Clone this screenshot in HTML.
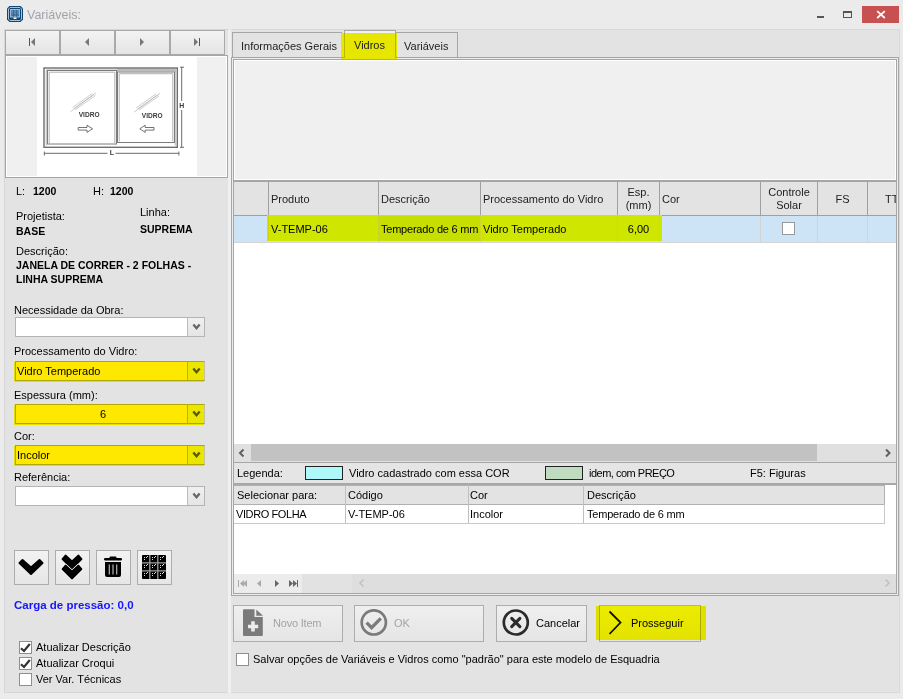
<!DOCTYPE html>
<html><head><meta charset="utf-8">
<style>
*{box-sizing:border-box;margin:0;padding:0}
html,body{width:903px;height:699px;overflow:hidden;background:#ebebeb;font-family:"Liberation Sans",sans-serif;font-size:11px;color:#000;position:relative}
.a{position:absolute}
.t{position:absolute;white-space:nowrap;line-height:13px}
.b{font-weight:bold;font-size:10.5px}
.nb{position:absolute;top:30px;height:25px;border:1px solid #a9a9a9;background:linear-gradient(#f3f3f3,#e4e4e4)}
.combo{position:absolute;left:15px;width:190px;height:20px;border:1px solid #b4b4b4;background:#fff}
.combo .dd{position:absolute;right:0;top:0;width:17px;height:18px;border-left:1px solid #bdbdbd;background:linear-gradient(#f0f0f0,#e5e5e5)}
.combo.y{background:#ffe800;border-color:#b0a800;border-right-color:#c4c4a0;box-shadow:-1px 1px 0 #e8e000}
.combo.y .dd{background:#ebe600;border-left-color:#b8b400}
.chev{position:absolute;left:4px;top:5px}
.cb{position:absolute;width:13px;height:13px;border:1px solid #8f8f8f;background:#fff}
.ib{position:absolute;top:550px;width:35px;height:35px;border:1px solid #adadad;background:linear-gradient(#f2f2f2,#e6e6e6)}
.btn{position:absolute;top:605px;height:37px;border:1px solid #adadad;background:linear-gradient(#efefef,#e5e5e5)}
.hc{position:absolute;top:0;height:33px;border-right:1px solid #a0a0a0}
</style></head><body>
<!-- title bar -->
<svg class="a" style="left:7px;top:6px" width="16" height="16"><path d="M2.5 0H13.5L16 2.5V13.5L13.5 16H2.5L0 13.5V2.5Z" fill="#0e4676"/><path d="M3 1.5H13L14.5 3V13L13 14.5H3L1.5 13V3Z" fill="none" stroke="#a9c1d8" stroke-width="1"/><rect x="3.5" y="3.5" width="9" height="7.5" fill="#5a86ac" stroke="#a3bad0" stroke-width="1"/><path d="M6.5 4V11M9.5 4V11M4 9H12" stroke="#2c5c88" stroke-width="0.7"/><rect x="6.5" y="11.5" width="3" height="1.5" fill="#fff"/></svg>
<div class="t" style="left:27px;top:9px;font-size:12.5px;color:#a0a4aa">Variáveis:</div>
<div class="a" style="left:817px;top:16px;width:7px;height:2px;background:#555"></div>
<div class="a" style="left:843px;top:11px;width:9px;height:7px;border:1px solid #555;border-top-width:2px"></div>
<div class="a" style="left:862px;top:6px;width:37px;height:17px;background:#c75050"></div>
<svg class="a" style="left:876px;top:10px" width="10" height="9"><path d="M1.2 1.2L8.8 8M8.8 1.2L1.2 8" stroke="#fff" stroke-width="1.8"/></svg>

<!-- LEFT PANEL -->
<div class="a" style="left:4px;top:29px;width:225px;height:664px;background:#e3e3e3;border:1px solid #d6d6d6"></div>
<div class="nb" style="left:5px;width:55px"></div>
<div class="nb" style="left:60px;width:55px"></div>
<div class="nb" style="left:115px;width:55px"></div>
<div class="nb" style="left:170px;width:55px"></div>
<svg class="a" style="left:27px;top:37px" width="10" height="10"><rect x="2" y="1" width="1" height="8" fill="#555"/><path d="M8 1L4 5L8 9Z" fill="#777"/></svg>
<svg class="a" style="left:82px;top:37px" width="10" height="10"><path d="M7 1L3 5L7 9Z" fill="#777"/></svg>
<svg class="a" style="left:137px;top:37px" width="10" height="10"><path d="M3 1L7 5L3 9Z" fill="#777"/></svg>
<svg class="a" style="left:192px;top:37px" width="10" height="10"><path d="M2 1L6 5L2 9Z" fill="#777"/><rect x="7" y="1" width="1" height="8" fill="#555"/></svg>

<!-- image box -->
<div class="a" style="left:5px;top:55px;width:223px;height:123px;border:1px solid #a6a6a6;background:#f0f0f0;box-shadow:inset 0 0 0 1px #fff"></div>
<div class="a" style="left:37px;top:57px;width:160px;height:119px;background:#fff"></div>
<svg class="a" style="left:37px;top:57px" width="160" height="119">
 <g fill="none">
  <rect x="80" y="11.5" width="59" height="3" fill="#c4c4c4"/>
  
  <rect x="7" y="11" width="133.3" height="79.3" stroke="#6e6e6e" stroke-width="1.4"/>
  <path d="M9.2 88.6V13H138.2V88.6" stroke="#b4b4b4"/>
  <rect x="10.5" y="13.5" width="69" height="73.5" stroke="#7c7c7c"/>
  <path d="M12.2 86V15.2H77.8V86" stroke="#b0b0b0"/>
  <rect x="80.5" y="15" width="57" height="70.5" stroke="#7c7c7c"/>
  <path d="M82.2 84.5V16.7H135.8V84.5" stroke="#b0b0b0"/>
  <path d="M144.7 10V44M144.7 53V90.5M143 10.2H147M143 90.3H147" stroke="#6a6a6a"/>
  <path d="M7.3 94.5V98.5M141.9 94.5V98.5M7.3 96.3H70.5M78.5 96.3H141.9" stroke="#6a6a6a"/>
 </g>
 <g stroke="#9a9a9a" stroke-width="0.5">
  <path d="M33.4 54.8L59.1 35.7M35.5 50.6L55.5 36.4M37 51.6L57 37.4M38.5 52.6L58.5 38.4"/>
  <path d="M97 55.2L123 36.3M99.1 51L119.1 36.8M100.6 52L120.6 37.8M102.1 53L122.1 38.8"/>
 </g>
 <text x="41.7" y="59.8" font-size="7.2" font-weight="bold" textLength="20.8" lengthAdjust="spacingAndGlyphs" font-family="Liberation Sans" fill="#3a3a3a">VIDRO</text>
 <text x="104.8" y="60.6" font-size="7.2" font-weight="bold" textLength="20.8" lengthAdjust="spacingAndGlyphs" font-family="Liberation Sans" fill="#3a3a3a">VIDRO</text>
 <text x="142.2" y="50.8" font-size="7" font-weight="bold" textLength="5" lengthAdjust="spacingAndGlyphs" font-family="Liberation Sans" fill="#3a3a3a">H</text>
 <text x="72.8" y="98.2" font-size="7" font-weight="bold" font-family="Liberation Sans" fill="#3a3a3a">L</text>
 <path d="M41.2 70.5H50V68.2L55.5 71.8L50 75.4V73.1H41.2Z" fill="#fff" stroke="#505050" stroke-width="0.8"/>
 <path d="M117 70.5H108.2V68.2L102.8 71.8L108.2 75.4V73.1H117Z" fill="#fff" stroke="#505050" stroke-width="0.8"/>
</svg>

<!-- labels -->
<div class="t" style="left:16px;top:185px">L:</div>
<div class="t b" style="left:33px;top:185px">1200</div>
<div class="t" style="left:93px;top:185px">H:</div>
<div class="t b" style="left:110px;top:185px">1200</div>
<div class="t" style="left:16px;top:210px">Projetista:</div>
<div class="t b" style="left:16px;top:225px">BASE</div>
<div class="t" style="left:140px;top:206px">Linha:</div>
<div class="t b" style="left:140px;top:223px">SUPREMA</div>
<div class="t" style="left:16px;top:245px">Descrição:</div>
<div class="t b" style="left:16px;top:259px">JANELA DE CORRER - 2 FOLHAS -</div>
<div class="t b" style="left:16px;top:273px">LINHA SUPREMA</div>

<div class="t" style="left:14px;top:304px">Necessidade da Obra:</div>
<div class="combo" style="top:317px"><div class="dd"><svg class="chev" width="9" height="8"><path d="M1.4 1.5L4.5 5.2L7.6 1.5" fill="none" stroke="#666" stroke-width="2.3"/></svg></div></div>
<div class="t" style="left:14px;top:345px">Processamento do Vidro:</div>
<div class="combo y" style="top:361px"><div class="t" style="left:1px;top:3px">Vidro Temperado</div><div class="dd"><svg class="chev" width="9" height="8"><path d="M1.3 1.5L4.5 5.2L7.7 1.5" fill="none" stroke="#5a5a00" stroke-width="2.4"/></svg></div></div>
<div class="t" style="left:14px;top:389px">Espessura (mm):</div>
<div class="combo y" style="top:404px"><div class="t" style="left:84px;top:3px">6</div><div class="dd"><svg class="chev" width="9" height="8"><path d="M1.3 1.5L4.5 5.2L7.7 1.5" fill="none" stroke="#5a5a00" stroke-width="2.4"/></svg></div></div>
<div class="t" style="left:14px;top:430px">Cor:</div>
<div class="combo y" style="top:445px"><div class="t" style="left:1px;top:3px">Incolor</div><div class="dd"><svg class="chev" width="9" height="8"><path d="M1.3 1.5L4.5 5.2L7.7 1.5" fill="none" stroke="#5a5a00" stroke-width="2.4"/></svg></div></div>
<div class="t" style="left:14px;top:471px">Referência:</div>
<div class="combo" style="top:486px"><div class="dd"><svg class="chev" width="9" height="8"><path d="M1.4 1.5L4.5 5.2L7.6 1.5" fill="none" stroke="#666" stroke-width="2.3"/></svg></div></div>

<div class="ib" style="left:14px"><svg class="a" style="left:3px;top:7px" width="28" height="20"><path d="M1.5 5L4.5 2L13 9.5L21.5 2L24.5 5L13 16Z" fill="#000" stroke="#000" stroke-width="2" stroke-linejoin="round"/></svg></div>
<div class="ib" style="left:55px"><svg class="a" style="left:5px;top:3px" width="24" height="28"><path d="M1.5 5L4.5 1.5L11 7.5L17.5 1.5L20.5 5L11 14.5Z" fill="#000" stroke="#000" stroke-width="1.8" stroke-linejoin="round"/><path d="M1.5 15L4.5 11.5L11 17.5L17.5 11.5L20.5 15L11 24.5Z" fill="#000" stroke="#fff" stroke-width="3.2" stroke-linejoin="round"/><path d="M1.5 15L4.5 11.5L11 17.5L17.5 11.5L20.5 15L11 24.5Z" fill="#000" stroke="#000" stroke-width="1.8" stroke-linejoin="round"/></svg></div>
<div class="ib" style="left:96px"><svg class="a" style="left:6px;top:5px" width="20" height="22"><rect x="1" y="2" width="18" height="2.5" rx="1.2" fill="#000"/><rect x="6.5" y="0.5" width="7" height="2.5" rx="1" fill="#000"/><path d="M2 6H18V19Q18 21 16 21H4Q2 21 2 19Z" fill="#000"/><path d="M6.3 8.5V18.5M10 8.5V18.5M13.7 8.5V18.5" stroke="#b4b4b4" stroke-width="1.2"/></svg></div>
<div class="ib" style="left:137px"><svg class="a" style="left:4px;top:4px" width="26" height="26"><rect x="0" y="0" width="24" height="24" rx="1" fill="#000"/><path d="M7.8 0V24M15.8 0V24M0 7.8H24M0 15.8H24" stroke="#a0a0a0" stroke-width="1.3"/><g fill="#ddd"><rect x="2" y="2" width="1" height="1"/><rect x="4" y="2" width="1" height="1"/><rect x="2" y="4" width="1" height="1"/><rect x="5" y="1" width="1" height="1"/><rect x="2" y="10" width="1" height="1"/><rect x="4" y="10" width="1" height="1"/><rect x="2" y="12" width="1" height="1"/><rect x="5" y="9" width="1" height="1"/><rect x="2" y="18" width="1" height="1"/><rect x="4" y="18" width="1" height="1"/><rect x="2" y="20" width="1" height="1"/><rect x="5" y="17" width="1" height="1"/><rect x="10" y="2" width="1" height="1"/><rect x="12" y="2" width="1" height="1"/><rect x="10" y="4" width="1" height="1"/><rect x="13" y="1" width="1" height="1"/><rect x="10" y="10" width="1" height="1"/><rect x="12" y="10" width="1" height="1"/><rect x="10" y="12" width="1" height="1"/><rect x="13" y="9" width="1" height="1"/><rect x="10" y="18" width="1" height="1"/><rect x="12" y="18" width="1" height="1"/><rect x="10" y="20" width="1" height="1"/><rect x="13" y="17" width="1" height="1"/><rect x="18" y="2" width="1" height="1"/><rect x="20" y="2" width="1" height="1"/><rect x="18" y="4" width="1" height="1"/><rect x="21" y="1" width="1" height="1"/><rect x="18" y="10" width="1" height="1"/><rect x="20" y="10" width="1" height="1"/><rect x="18" y="12" width="1" height="1"/><rect x="21" y="9" width="1" height="1"/><rect x="18" y="18" width="1" height="1"/><rect x="20" y="18" width="1" height="1"/><rect x="18" y="20" width="1" height="1"/><rect x="21" y="17" width="1" height="1"/></g></svg></div>

<div class="t b" style="left:14px;top:599px;color:#1515ff;font-size:11.5px">Carga de pressão: 0,0</div>

<div class="cb" style="left:19px;top:641px"><svg class="a" style="left:0;top:0" width="11" height="11"><path d="M1 6.2L4 9L9.8 2" fill="none" stroke="#333" stroke-width="2.2"/></svg></div>
<div class="t" style="left:36px;top:641px">Atualizar Descrição</div>
<div class="cb" style="left:19px;top:657px"><svg class="a" style="left:0;top:0" width="11" height="11"><path d="M1 6.2L4 9L9.8 2" fill="none" stroke="#333" stroke-width="2.2"/></svg></div>
<div class="t" style="left:36px;top:657px">Atualizar Croqui</div>
<div class="cb" style="left:19px;top:673px"></div>
<div class="t" style="left:36px;top:673px">Ver Var. Técnicas</div>

<!-- splitter -->
<div class="a" style="left:228px;top:30px;width:3px;height:663px;background:#f0f0f0"></div>

<!-- RIGHT PANEL -->
<div class="a" style="left:231px;top:29px;width:669px;height:664px;background:#e3e3e3;border:1px solid #d8d8d8;border-left-color:#e3e3e3"></div>



<!-- tabs -->
<div class="a" style="left:232px;top:32px;width:110px;height:26px;border:1px solid #a6a6a6;border-bottom:none;background:#e3e3e3"></div>
<div class="t" style="left:241px;top:40px;color:#222">Informações Gerais</div>
<div class="a" style="left:395px;top:32px;width:63px;height:26px;border:1px solid #a6a6a6;border-bottom:none;border-left:none;background:#e3e3e3"></div>
<div class="t" style="left:404px;top:40px;color:#222">Variáveis</div>
<!-- tab sheet -->
<div class="a" style="left:231px;top:57px;width:668px;height:539px;border:1px solid #a6a6a6;background:#ececec"></div>
<div class="a" style="left:344px;top:30px;width:52px;height:29px;border:1px solid #a6a6a6;border-bottom:none;background:#f0f0f0"></div>
<div class="a" style="left:341px;top:33px;width:56px;height:26px;background:#e6e600"></div>
<div class="a" style="left:344px;top:33px;width:1px;height:25px;background:#b8b800"></div>
<div class="a" style="left:395px;top:33px;width:1px;height:25px;background:#b8b800"></div><div class="a" style="left:341px;top:57px;width:4px;height:1px;background:#b8b800"></div><div class="a" style="left:395px;top:57px;width:2px;height:1px;background:#b8b800"></div>
<div class="t" style="left:354px;top:39px;color:#222">Vidros</div>
<!-- inner sunken area -->
<div class="a" style="left:233px;top:59px;width:664px;height:535px;border:1px solid #a6a6a6;background:#fff"></div>
<div class="a" style="left:234px;top:60px;width:662px;height:120px;border:1px solid #fff;border-left-color:#fff;background:#f0f0f0"></div>
<div class="a" style="left:234px;top:180px;width:662px;height:2px;background:#a6a6a6"></div>
<!-- main grid -->
<div class="a" style="left:234px;top:182px;width:662px;height:262px;background:#fff;overflow:hidden">
 <div class="a" style="left:0;top:0;width:662px;height:34px;background:#e3e3e3;border-bottom:1px solid #a0a0a0"></div>
 <div class="a" style="left:0;top:34px;width:662px;height:27px;background:#cde4f7;border-bottom:1px solid #d4d4d4"></div>
 <div class="a" style="left:33px;top:33px;width:395px;height:26px;background:#cee600"></div>
 <div class="a" style="left:144px;top:34px;width:102px;height:25px;background:#c6de00"></div>
 <div class="a" style="left:34px;top:0;width:1px;height:33px;background:#a0a0a0"></div><div class="a" style="left:34px;top:34px;width:1px;height:25px;background:#e0b000;opacity:.35"></div>
 <div class="a" style="left:144px;top:0;width:1px;height:33px;background:#a0a0a0"></div>
 <div class="a" style="left:246px;top:0;width:1px;height:33px;background:#a0a0a0"></div>
 <div class="a" style="left:383px;top:0;width:1px;height:33px;background:#a0a0a0"></div>
 <div class="a" style="left:425px;top:0;width:1px;height:33px;background:#a0a0a0"></div>
 <div class="a" style="left:526px;top:0;width:1px;height:33px;background:#a0a0a0"></div>
 <div class="a" style="left:583px;top:0;width:1px;height:33px;background:#a0a0a0"></div>
 <div class="a" style="left:633px;top:0;width:1px;height:33px;background:#a0a0a0"></div>
 <div class="a" style="left:144px;top:34px;width:1px;height:26px;background:#d8c060;opacity:.45"></div>
 <div class="a" style="left:246px;top:34px;width:1px;height:26px;background:#d8c060;opacity:.45"></div>
 <div class="a" style="left:383px;top:34px;width:1px;height:26px;background:#d8c060;opacity:.45"></div>
 <div class="a" style="left:425px;top:34px;width:1px;height:26px;background:#d8c060;opacity:.45"></div>
 <div class="a" style="left:526px;top:34px;width:1px;height:26px;background:#d4d4d4;opacity:1"></div>
 <div class="a" style="left:583px;top:34px;width:1px;height:26px;background:#d4d4d4;opacity:1"></div>
 <div class="a" style="left:633px;top:34px;width:1px;height:26px;background:#d4d4d4;opacity:1"></div>
 <div class="t" style="left:37px;top:11px;color:#222">Produto</div>
 <div class="t" style="left:147px;top:11px;color:#222">Descrição</div>
 <div class="t" style="left:249px;top:11px;color:#222">Processamento do Vidro</div>
 <div class="t" style="left:384px;top:4px;width:41px;text-align:center;color:#222">Esp.</div>
 <div class="t" style="left:384px;top:17px;width:41px;text-align:center;color:#222">(mm)</div>
 <div class="t" style="left:428px;top:11px;color:#222">Cor</div>
 <div class="t" style="left:527px;top:4px;width:56px;text-align:center;color:#222">Controle</div>
 <div class="t" style="left:527px;top:17px;width:56px;text-align:center;color:#222">Solar</div>
 <div class="t" style="left:584px;top:11px;width:49px;text-align:center;color:#222">FS</div>
 <div class="t" style="left:651px;top:11px;color:#222">TT</div>
 <div class="t" style="left:37px;top:41px">V-TEMP-06</div>
 <div class="t" style="left:147px;top:41px;letter-spacing:-0.22px">Temperado de 6 mm</div>
 <div class="t" style="left:249px;top:41px">Vidro Temperado</div>
 <div class="t" style="left:384px;top:41px;width:41px;text-align:center">6,00</div>
 <div class="cb" style="left:548px;top:40px;border-color:#999"></div>
</div>
<!-- h scrollbar -->
<div class="a" style="left:234px;top:444px;width:662px;height:18px;background:#e0e0e0"></div>
<div class="a" style="left:251px;top:444px;width:566px;height:17px;background:#c2c2c2"></div>
<svg class="a" style="left:236px;top:448px" width="12" height="10"><path d="M7.5 1.5L4 5L7.5 8.5" fill="none" stroke="#606060" stroke-width="2"/></svg>
<svg class="a" style="left:882px;top:448px" width="12" height="10"><path d="M4 1.5L7.5 5L4 8.5" fill="none" stroke="#606060" stroke-width="2"/></svg>
<!-- legend -->
<div class="a" style="left:234px;top:462px;width:662px;height:1px;background:#a6a6a6"></div>
<div class="a" style="left:234px;top:463px;width:662px;height:22px;background:#e5e5e5;border-bottom:2px solid #a8a8a8"></div>
<div class="t" style="left:237px;top:467px">Legenda:</div>
<div class="a" style="left:305px;top:466px;width:38px;height:14px;border:1px solid #222;background:#aef8fa"></div>
<div class="t" style="left:349px;top:467px">Vidro cadastrado com essa COR</div>
<div class="a" style="left:545px;top:466px;width:38px;height:14px;border:1px solid #222;background:#c0dcc0"></div>
<div class="t" style="left:589px;top:467px;letter-spacing:-0.5px">idem, com PREÇO</div>
<div class="t" style="left:750px;top:467px">F5: Figuras</div>
<!-- lower grid -->
<div class="a" style="left:234px;top:485px;width:662px;height:88px;background:#fff"></div>
<div class="a" style="left:234px;top:485px;width:651px;height:20px;background:#e3e3e3;border:1px solid #b0b0b0;border-left:none"></div>
<div class="a" style="left:234px;top:504px;width:651px;height:20px;border-right:1px solid #c8c8c8;border-bottom:1px solid #c8c8c8"></div>
<div class="a" style="left:345px;top:485px;width:1px;height:39px;background:#c0c0c0"></div>
<div class="a" style="left:468px;top:485px;width:1px;height:39px;background:#c0c0c0"></div>
<div class="a" style="left:583px;top:485px;width:1px;height:39px;background:#c0c0c0"></div>
<div class="t" style="left:237px;top:489px">Selecionar para:</div>
<div class="t" style="left:348px;top:489px">Código</div>
<div class="t" style="left:470px;top:489px">Cor</div>
<div class="t" style="left:587px;top:489px">Descrição</div>
<div class="t" style="left:236px;top:508px;letter-spacing:-0.4px">VIDRO FOLHA</div>
<div class="t" style="left:348px;top:508px">V-TEMP-06</div>
<div class="t" style="left:470px;top:508px">Incolor</div>
<div class="t" style="left:587px;top:508px;letter-spacing:-0.2px">Temperado de 6 mm</div>
<!-- nav bar -->
<div class="a" style="left:234px;top:574px;width:662px;height:19px;background:#dedede"></div>
<div class="a" style="left:234px;top:574px;width:68px;height:19px;background:#ececec"></div>
<div class="a" style="left:302px;top:574px;width:50px;height:19px;background:#e2e2e2"></div>
<svg class="a" style="left:236px;top:578px" width="66" height="12">
 <path d="M2 2H3V9H2Z M8 2L4 5.5L8 9Z M11 2L7 5.5L11 9Z" fill="#aaa"/>
 <path d="M25 2L21 5.5L25 9Z" fill="#aaa"/>
 <path d="M39 2L43 5.5L39 9Z" fill="#666"/>
 <path d="M53 2L57 5.5L53 9Z M57 2L61 5.5L57 9Z M61 2H62V9H61Z" fill="#666"/>
</svg>
<svg class="a" style="left:357px;top:578px" width="10" height="10"><path d="M6.5 1.5L3 5L6.5 8.5" fill="none" stroke="#c0c0c0" stroke-width="1.5"/></svg>
<svg class="a" style="left:882px;top:578px" width="10" height="10"><path d="M3.5 1.5L7 5L3.5 8.5" fill="none" stroke="#c0c0c0" stroke-width="1.5"/></svg>
<!-- buttons -->
<div class="btn" style="left:233px;width:110px">
 <svg class="a" style="left:8px;top:3px" width="22" height="28"><path d="M1 1.3Q1 0.3 2 0.3H12.5V8H20.8V26Q20.8 27 19.8 27H2Q1 27 1 26Z" fill="#7a7a7a"/><path d="M14.3 0.5L21 6.8H14.3Z" fill="#7a7a7a"/><path d="M11 12.3V22.5M6 17.5H16.2" stroke="#ececec" stroke-width="3.6"/></svg>
 <div class="t" style="left:39px;top:11px;color:#a0a4aa;letter-spacing:-0.2px">Novo Item</div>
</div>
<div class="btn" style="left:354px;width:130px">
 <svg class="a" style="left:4px;top:3px" width="29" height="29"><circle cx="14.8" cy="13.4" r="12.1" fill="none" stroke="#7a7a7a" stroke-width="2.7"/><path d="M7.6 13.6L12.6 18.6L21.8 9.4" fill="none" stroke="#7a7a7a" stroke-width="3.3"/></svg>
 <div class="t" style="left:39px;top:11px;color:#a0a4aa">OK</div>
</div>
<div class="btn" style="left:496px;width:91px">
 <svg class="a" style="left:4px;top:3px" width="29" height="29"><circle cx="14.8" cy="13.5" r="12" fill="none" stroke="#2b2b2b" stroke-width="2.7"/><path d="M10.7 9.4L18.9 17.6M18.9 9.4L10.7 17.6" stroke="#2b2b2b" stroke-width="3" stroke-linecap="round"/></svg>
 <div class="t" style="left:39px;top:11px">Cancelar</div>
</div>
<div class="btn" style="left:599px;width:102px">
 <svg class="a" style="left:6px;top:4px" width="18" height="26"><path d="M3.5 1.5L14.5 12.5L3.5 24" fill="none" stroke="#111" stroke-width="1.8"/></svg>
 <div class="t" style="left:31px;top:11px">Prosseguir</div>
</div>
<div class="a" style="left:596px;top:606px;width:110px;height:34px;background:#fcfc00;mix-blend-mode:multiply"></div>
<div class="cb" style="left:236px;top:653px"></div>
<div class="t" style="left:253px;top:653px">Salvar opções de Variáveis e Vidros como "padrão" para este modelo de Esquadria</div>
</body></html>
